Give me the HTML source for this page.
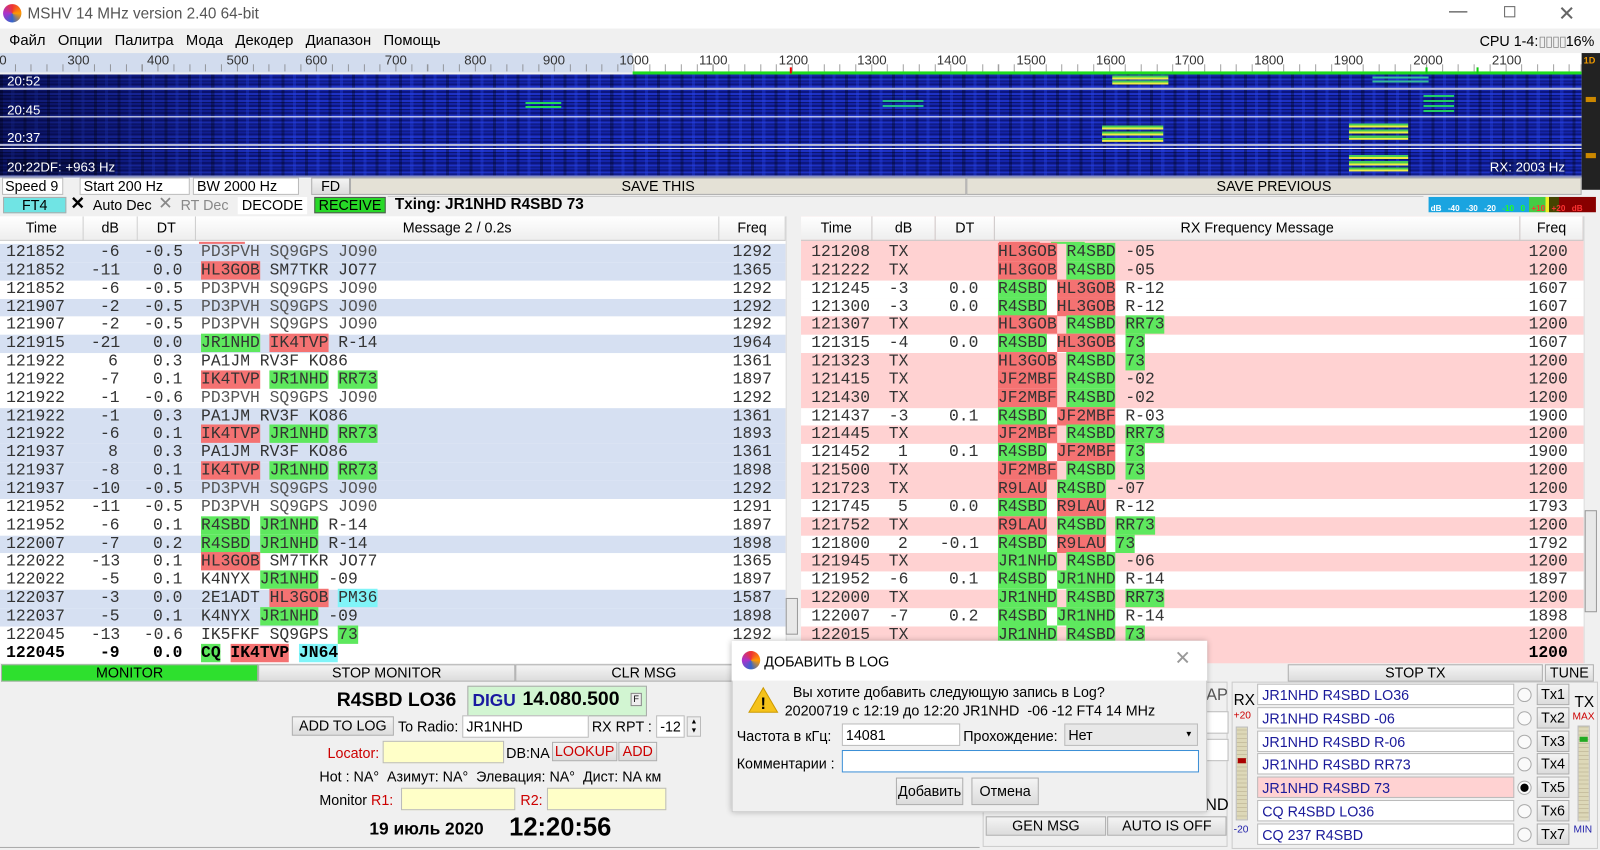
<!DOCTYPE html>
<html><head><meta charset="utf-8">
<style>
*{box-sizing:border-box;margin:0;padding:0}
body{width:1600px;height:850px;overflow:hidden;background:#f0f0f0;font-family:"Liberation Sans",sans-serif;font-size:14px;color:#000;position:relative}
#w{position:absolute;left:0;top:0;width:1568px;height:833px;transform:scale(1.020408);transform-origin:0 0}
.a{position:absolute}
.btn{position:absolute;border:1px solid #adadad;background:linear-gradient(#f4f4f4,#dcdcdc);text-align:center;font-size:14px;line-height:15px}
.tbl{position:absolute;background:#fff;overflow:hidden;font-family:"Liberation Mono",monospace;font-size:16px;color:#333}
.hd{position:absolute;top:0;height:24px;background:linear-gradient(#fff,#eee);border-right:1px solid #c8c8c8;border-bottom:1px solid #c8c8c8;font-family:"Liberation Sans",sans-serif;font-size:14px;text-align:center;line-height:23px;color:#000}
.r{position:relative;height:17.85px;line-height:17.85px;white-space:pre}
.r span{position:absolute;top:0}
.b{background:#d6e0f2}.p{background:#ffd2d2}
.R{background:#f47272;font-style:normal}.G{background:#5ee85e;font-style:normal}.C{background:#80f4f8;font-style:normal}
i{font-style:normal}
.sb{position:absolute;background:#f0f0f0;border-left:1px solid #ddd}
.in{position:absolute;background:#fff;border:1px solid #bbb;font-size:14px;line-height:20px;padding-left:3px}
.y{background:#ffffc8}
.tx{position:absolute;left:1232px;width:252px;height:21px;background:#fff;border:1px solid #bbb;color:#1a1a9a;font-size:14px;line-height:20px;padding-left:4px}
.rd{position:absolute;left:1487px;width:14px;height:14px;border-radius:50%;border:1px solid #aaa;background:#fafafa}
.tb{position:absolute;left:1506px;width:32px;height:21px;border:1px solid #adadad;background:linear-gradient(#f4f4f4,#dcdcdc);font-size:14px;text-align:center;line-height:19px}
</style></head><body><div id="w">
<div class="a" style="left:0;top:0;width:1568px;height:28px;background:#fff"></div>
<div class="a" style="left:3px;top:4px;width:18px;height:18px;border-radius:50%;background:conic-gradient(#e33,#f90,#36c,#a3c,#e33)"></div>
<div class="a" style="left:27px;top:5px;font-size:15px;color:#555">MSHV 14 MHz version 2.40 64-bit</div>
<div class="a" style="left:1420px;top:0px;font-size:18px;color:#555">—</div>
<div class="a" style="left:1474px;top:6px;width:11px;height:11px;border:1px solid #666"></div>
<div class="a" style="left:1527px;top:1px;font-size:20px;color:#666">✕</div>
<div class="a" style="left:0;top:28px;width:1568px;height:24px;background:#f0f0f0"></div>
<div class="a" style="left:9px;top:32px;font-size:14.5px;word-spacing:8px">Файл Опции Палитра Мода Декодер Диапазон Помощь</div>
<div class="a" style="left:1450px;top:32px;font-size:14px">CPU 1-4:<span style="letter-spacing:-1px;color:#888">▯▯▯▯</span>16%</div>
<div class="a" style="left:0;top:52px;width:620px;height:19px;background:#d2dcee"></div>
<div class="a" style="left:620px;top:52px;width:930px;height:19px;background:#fff"></div>
<div class="a" style="left:0;top:63px;width:1550px;height:7px;background:repeating-linear-gradient(90deg,#777 0 1px,transparent 1px 15.54px);background-position:-1px 0;opacity:.7"></div>
<div class="a" style="left:620px;top:70px;width:930px;height:3px;background:#1fdc1f"></div>
<div class="a" style="left:774px;top:66px;width:2px;height:6px;background:#e00"></div>
<div class="a" style="left:1397px;top:66px;width:2px;height:6px;background:#1c1"></div>
<div class="a" style="left:1447px;top:66px;width:2px;height:6px;background:#1c1"></div>
<div class="a" style="left:0;top:51px;font-size:13px;color:#333;width:1550px;height:14px">
<span class="a" style="left:-8px">00</span><span class="a" style="left:66px">300</span><span class="a" style="left:144px">400</span><span class="a" style="left:222px">500</span><span class="a" style="left:299px">600</span><span class="a" style="left:377px">700</span><span class="a" style="left:455px">800</span><span class="a" style="left:532px">900</span><span class="a" style="left:607px">1000</span><span class="a" style="left:685px">1100</span><span class="a" style="left:763px">1200</span><span class="a" style="left:840px">1300</span><span class="a" style="left:918px">1400</span><span class="a" style="left:996px">1500</span><span class="a" style="left:1074px">1600</span><span class="a" style="left:1151px">1700</span><span class="a" style="left:1229px">1800</span><span class="a" style="left:1307px">1900</span><span class="a" style="left:1385px">2000</span><span class="a" style="left:1462px">2100</span></div>
<div class="a" style="left:0;top:73px;width:1550px;height:100px;background:repeating-linear-gradient(0deg,#1424a8 0 2px,#0a1470 2px 3px,#1e32c4 3px 5px,#0c1680 5px 7px);"></div>
<div class="a" style="left:0;top:73px;width:1550px;height:100px;background:repeating-linear-gradient(90deg,rgba(0,0,0,.3) 0 3px,transparent 3px 11px,rgba(40,70,240,.35) 11px 14px,transparent 14px 23px)"></div>
<div class="a" style="left:0;top:73px;width:300px;height:100px;background:linear-gradient(90deg,rgba(0,0,20,.5),transparent)"></div>
<div class="a" style="left:0;top:86px;width:1550px;height:2px;background:#b8bcd8"></div>
<div class="a" style="left:0;top:114px;width:1550px;height:1px;background:#fff"></div>
<div class="a" style="left:0;top:141px;width:1550px;height:2px;background:#b8bcd8"></div>
<div class="a" style="left:0;top:145px;width:1550px;height:1px;background:#fff"></div>
<div class="a" style="left:0;top:172px;width:1550px;height:2px;background:#8890c0"></div>
<div class="a" style="left:1090px;top:73px;width:55px;height:10px;background:repeating-linear-gradient(0deg,#ee4 0 2px,#4c5 2px 4px,transparent 4px 5px)"></div>
<div class="a" style="left:1345px;top:75px;width:55px;height:6px;background:repeating-linear-gradient(0deg,#3b9 0 2px,transparent 2px 4px)"></div>
<div class="a" style="left:1395px;top:92px;width:30px;height:18px;background:repeating-linear-gradient(0deg,#2c6 0 2px,transparent 2px 5px)"></div>
<div class="a" style="left:865px;top:95px;width:40px;height:10px;background:repeating-linear-gradient(0deg,#2b8 0 2px,transparent 2px 5px)"></div>
<div class="a" style="left:515px;top:100px;width:35px;height:6px;background:repeating-linear-gradient(0deg,#2d5 0 2px,transparent 2px 4px)"></div>
<div class="a" style="left:1080px;top:121px;width:60px;height:18px;background:repeating-linear-gradient(0deg,#ee4 0 2px,#4c5 2px 4px,transparent 4px 6px)"></div>
<div class="a" style="left:1322px;top:121px;width:58px;height:16px;background:repeating-linear-gradient(0deg,#ee4 0 2px,#4c5 2px 4px,transparent 4px 6px)"></div>
<div class="a" style="left:1322px;top:150px;width:58px;height:18px;background:repeating-linear-gradient(0deg,#ee4 0 2px,#4c5 2px 4px,transparent 4px 6px)"></div>
<div class="a" style="left:7px;top:72px;color:#fff;font-size:13px">20:52</div>
<div class="a" style="left:7px;top:100px;color:#fff;font-size:13px">20:45</div>
<div class="a" style="left:7px;top:127px;color:#fff;font-size:13px">20:37</div>
<div class="a" style="left:7px;top:156px;color:#fff;font-size:13px;background:rgba(0,0,0,.3)">20:22DF: +963 Hz</div>
<div class="a" style="left:1460px;top:156px;color:#fff;font-size:13px;background:rgba(0,0,0,.3)">RX: 2003 Hz</div>
<div class="a" style="left:1550px;top:52px;width:18px;height:134px;background:#222"></div>
<div class="a" style="left:1552px;top:54px;font-size:9px;color:#e90;font-weight:bold">1D</div>
<div class="a" style="left:1554px;top:95px;width:10px;height:5px;background:#c80"></div>
<div class="a" style="left:1554px;top:150px;width:10px;height:5px;background:#c80"></div>
<div class="in" style="left:2px;top:174px;width:60px;height:17px;line-height:15px;font-size:14px;padding-left:2px">Speed 9</div>
<div class="in" style="left:78px;top:174px;width:108px;height:17px;line-height:15px">Start 200 Hz</div>
<div class="in" style="left:189px;top:174px;width:104px;height:17px;line-height:15px">BW 2000 Hz</div>
<div class="btn" style="left:305px;top:174px;width:38px;height:17px">FD</div>
<div class="btn" style="left:343px;top:174px;width:604px;height:17px;background:#e4e1d6">SAVE THIS</div>
<div class="btn" style="left:947px;top:174px;width:603px;height:17px;background:#e4e1d6">SAVE PREVIOUS</div>
<div class="btn" style="left:3px;top:193px;width:62px;height:16px;background:#70e4e4">FT4</div>
<div class="a" style="left:69px;top:190px;font-size:17px;font-weight:bold">✕</div>
<div class="a" style="left:91px;top:193px">Auto Dec</div>
<div class="a" style="left:155px;top:190px;font-size:17px;color:#888">✕</div>
<div class="a" style="left:177px;top:193px;color:#888">RT Dec</div>
<div class="a" style="left:233px;top:193px;width:68px;height:17px;background:#fff;text-align:center">DECODE</div>
<div class="btn" style="left:308px;top:193px;width:70px;height:16px;background:#27d827;border-color:#555">RECEIVE</div>
<div class="a" style="left:380px;top:192px;width:1015px;height:19px;background:#f0f0f0;border-top:1px solid #ccc"></div>
<div class="a" style="left:387px;top:192px;font-weight:bold;font-size:15px">Txing: JR1NHD R4SBD 73</div>
<div class="a" style="left:1400px;top:193px;width:164px;height:15px;background:linear-gradient(90deg,#1aa4e0 0 60%,#4c4 60% 70%,#ee2 70% 72%,#440 72% 78%,#800 78%)"></div>
<div class="a" style="left:1402px;top:200px;font-size:8px;color:#fff;font-weight:bold;word-spacing:4px">dB -40 -30 -20 <span style="color:#2f2">-10 0</span> <span style="color:#f33">+10 +20 dB</span></div>

<div class="tbl" style="left:0;top:212px;width:770px;height:438px">
<div class="hd" style="left:0;width:82px">Time</div><div class="hd" style="left:82px;width:53px">dB</div><div class="hd" style="left:135px;width:57px">DT</div><div class="hd" style="left:192px;width:513px">Message 2 / 0.2s</div><div class="hd" style="left:705px;width:65px">Freq</div>
<div class="a" style="left:195px;top:25px;width:45px;height:3px;background:#f47272"></div>
<div style="position:absolute;top:27px;left:0;width:770px">
<div class="r b"><span style="left:6px">121852</span><span style="left:98px">-6</span><span style="left:141px">-0.5</span><span style="left:197px;color:#555">PD3PVH SQ9GPS JO90</span><span style="left:718px">1292</span></div>
<div class="r b"><span style="left:6px">121852</span><span style="left:89px">-11</span><span style="left:150px">0.0</span><span style="left:197px"><i class=R>HL3GOB</i> SM7TKR JO77</span><span style="left:718px">1365</span></div>
<div class="r"><span style="left:6px">121852</span><span style="left:98px">-6</span><span style="left:141px">-0.5</span><span style="left:197px;color:#555">PD3PVH SQ9GPS JO90</span><span style="left:718px">1292</span></div>
<div class="r b"><span style="left:6px">121907</span><span style="left:98px">-2</span><span style="left:141px">-0.5</span><span style="left:197px;color:#555">PD3PVH SQ9GPS JO90</span><span style="left:718px">1292</span></div>
<div class="r"><span style="left:6px">121907</span><span style="left:98px">-2</span><span style="left:141px">-0.5</span><span style="left:197px;color:#555">PD3PVH SQ9GPS JO90</span><span style="left:718px">1292</span></div>
<div class="r b"><span style="left:6px">121915</span><span style="left:89px">-21</span><span style="left:150px">0.0</span><span style="left:197px"><i class=G>JR1NHD</i> <i class=R>IK4TVP</i> R-14</span><span style="left:718px">1964</span></div>
<div class="r"><span style="left:6px">121922</span><span style="left:106px">6</span><span style="left:150px">0.3</span><span style="left:197px">PA1JM RV3F KO86</span><span style="left:718px">1361</span></div>
<div class="r"><span style="left:6px">121922</span><span style="left:98px">-7</span><span style="left:150px">0.1</span><span style="left:197px"><i class=R>IK4TVP</i> <i class=G>JR1NHD</i> <i class=G>RR73</i></span><span style="left:718px">1897</span></div>
<div class="r"><span style="left:6px">121922</span><span style="left:98px">-1</span><span style="left:141px">-0.6</span><span style="left:197px;color:#555">PD3PVH SQ9GPS JO90</span><span style="left:718px">1292</span></div>
<div class="r b"><span style="left:6px">121922</span><span style="left:98px">-1</span><span style="left:150px">0.3</span><span style="left:197px">PA1JM RV3F KO86</span><span style="left:718px">1361</span></div>
<div class="r b"><span style="left:6px">121922</span><span style="left:98px">-6</span><span style="left:150px">0.1</span><span style="left:197px"><i class=R>IK4TVP</i> <i class=G>JR1NHD</i> <i class=G>RR73</i></span><span style="left:718px">1893</span></div>
<div class="r b"><span style="left:6px">121937</span><span style="left:106px">8</span><span style="left:150px">0.3</span><span style="left:197px">PA1JM RV3F KO86</span><span style="left:718px">1361</span></div>
<div class="r b"><span style="left:6px">121937</span><span style="left:98px">-8</span><span style="left:150px">0.1</span><span style="left:197px"><i class=R>IK4TVP</i> <i class=G>JR1NHD</i> <i class=G>RR73</i></span><span style="left:718px">1898</span></div>
<div class="r b"><span style="left:6px">121937</span><span style="left:89px">-10</span><span style="left:141px">-0.5</span><span style="left:197px;color:#555">PD3PVH SQ9GPS JO90</span><span style="left:718px">1292</span></div>
<div class="r"><span style="left:6px">121952</span><span style="left:89px">-11</span><span style="left:141px">-0.5</span><span style="left:197px;color:#555">PD3PVH SQ9GPS JO90</span><span style="left:718px">1291</span></div>
<div class="r"><span style="left:6px">121952</span><span style="left:98px">-6</span><span style="left:150px">0.1</span><span style="left:197px"><i class=G>R4SBD</i> <i class=G>JR1NHD</i> R-14</span><span style="left:718px">1897</span></div>
<div class="r b"><span style="left:6px">122007</span><span style="left:98px">-7</span><span style="left:150px">0.2</span><span style="left:197px"><i class=G>R4SBD</i> <i class=G>JR1NHD</i> R-14</span><span style="left:718px">1898</span></div>
<div class="r"><span style="left:6px">122022</span><span style="left:89px">-13</span><span style="left:150px">0.1</span><span style="left:197px"><i class=R>HL3GOB</i> SM7TKR JO77</span><span style="left:718px">1365</span></div>
<div class="r"><span style="left:6px">122022</span><span style="left:98px">-5</span><span style="left:150px">0.1</span><span style="left:197px">K4NYX <i class=G>JR1NHD</i> -09</span><span style="left:718px">1897</span></div>
<div class="r b"><span style="left:6px">122037</span><span style="left:98px">-3</span><span style="left:150px">0.0</span><span style="left:197px">2E1ADT <i class=R>HL3GOB</i> <i class=C>PM36</i></span><span style="left:718px">1587</span></div>
<div class="r b"><span style="left:6px">122037</span><span style="left:98px">-5</span><span style="left:150px">0.1</span><span style="left:197px">K4NYX <i class=G>JR1NHD</i> -09</span><span style="left:718px">1898</span></div>
<div class="r"><span style="left:6px">122045</span><span style="left:89px">-13</span><span style="left:141px">-0.6</span><span style="left:197px">IK5FKF SQ9GPS <i class=G>73</i></span><span style="left:718px">1292</span></div>
<div class="r" style="font-weight:bold;color:#000"><span style="left:6px">122045</span><span style="left:98px">-9</span><span style="left:150px">0.0</span><span style="left:197px"><i class=G>CQ</i> <i class=R>IK4TVP</i> <i class=C>JN64</i></span><span style="left:718px">1292</span></div>
</div></div>
<div class="sb" style="left:770px;top:212px;width:14px;height:438px"></div>
<div class="a" style="left:770px;top:586px;width:12px;height:36px;border:1px solid #999;background:#e8e8e8"></div>

<div class="tbl" style="left:785px;top:212px;width:767px;height:438px;background:#ffd2d2">
<div class="hd" style="left:0;width:70px">Time</div><div class="hd" style="left:70px;width:62px">dB</div><div class="hd" style="left:132px;width:58px">DT</div><div class="hd" style="left:190px;width:515px">RX Frequency Message</div><div class="hd" style="left:705px;width:62px">Freq</div>
<div class="a" style="left:194px;top:25px;width:40px;height:3px;background:#f47272"></div><div class="a" style="left:245px;top:25px;width:33px;height:3px;background:#5ee85e"></div>
<div style="position:absolute;top:27px;left:0;width:767px">
<div class="r p"><span style="left:10px">121208</span><span style="left:86px">TX</span><span style="left:193px"><i class=R>HL3GOB</i> <i class=G>R4SBD</i> -05</span><span style="left:713px">1200</span></div>
<div class="r p"><span style="left:10px">121222</span><span style="left:86px">TX</span><span style="left:193px"><i class=R>HL3GOB</i> <i class=G>R4SBD</i> -05</span><span style="left:713px">1200</span></div>
<div class="r" style="background:#fff"><span style="left:10px">121245</span><span style="left:86px">-3</span><span style="left:145px">0.0</span><span style="left:193px"><i class=G>R4SBD</i> <i class=R>HL3GOB</i> R-12</span><span style="left:713px">1607</span></div>
<div class="r" style="background:#fff"><span style="left:10px">121300</span><span style="left:86px">-3</span><span style="left:145px">0.0</span><span style="left:193px"><i class=G>R4SBD</i> <i class=R>HL3GOB</i> R-12</span><span style="left:713px">1607</span></div>
<div class="r p"><span style="left:10px">121307</span><span style="left:86px">TX</span><span style="left:193px"><i class=R>HL3GOB</i> <i class=G>R4SBD</i> <i class=G>RR73</i></span><span style="left:713px">1200</span></div>
<div class="r" style="background:#fff"><span style="left:10px">121315</span><span style="left:86px">-4</span><span style="left:145px">0.0</span><span style="left:193px"><i class=G>R4SBD</i> <i class=R>HL3GOB</i> <i class=G>73</i></span><span style="left:713px">1607</span></div>
<div class="r p"><span style="left:10px">121323</span><span style="left:86px">TX</span><span style="left:193px"><i class=R>HL3GOB</i> <i class=G>R4SBD</i> <i class=G>73</i></span><span style="left:713px">1200</span></div>
<div class="r p"><span style="left:10px">121415</span><span style="left:86px">TX</span><span style="left:193px"><i class=R>JF2MBF</i> <i class=G>R4SBD</i> -02</span><span style="left:713px">1200</span></div>
<div class="r p"><span style="left:10px">121430</span><span style="left:86px">TX</span><span style="left:193px"><i class=R>JF2MBF</i> <i class=G>R4SBD</i> -02</span><span style="left:713px">1200</span></div>
<div class="r" style="background:#fff"><span style="left:10px">121437</span><span style="left:86px">-3</span><span style="left:145px">0.1</span><span style="left:193px"><i class=G>R4SBD</i> <i class=R>JF2MBF</i> R-03</span><span style="left:713px">1900</span></div>
<div class="r p"><span style="left:10px">121445</span><span style="left:86px">TX</span><span style="left:193px"><i class=R>JF2MBF</i> <i class=G>R4SBD</i> <i class=G>RR73</i></span><span style="left:713px">1200</span></div>
<div class="r" style="background:#fff"><span style="left:10px">121452</span><span style="left:95px">1</span><span style="left:145px">0.1</span><span style="left:193px"><i class=G>R4SBD</i> <i class=R>JF2MBF</i> <i class=G>73</i></span><span style="left:713px">1900</span></div>
<div class="r p"><span style="left:10px">121500</span><span style="left:86px">TX</span><span style="left:193px"><i class=R>JF2MBF</i> <i class=G>R4SBD</i> <i class=G>73</i></span><span style="left:713px">1200</span></div>
<div class="r p"><span style="left:10px">121723</span><span style="left:86px">TX</span><span style="left:193px"><i class=R>R9LAU</i> <i class=G>R4SBD</i> -07</span><span style="left:713px">1200</span></div>
<div class="r" style="background:#fff"><span style="left:10px">121745</span><span style="left:95px">5</span><span style="left:145px">0.0</span><span style="left:193px"><i class=G>R4SBD</i> <i class=R>R9LAU</i> R-12</span><span style="left:713px">1793</span></div>
<div class="r p"><span style="left:10px">121752</span><span style="left:86px">TX</span><span style="left:193px"><i class=R>R9LAU</i> <i class=G>R4SBD</i> <i class=G>RR73</i></span><span style="left:713px">1200</span></div>
<div class="r" style="background:#fff"><span style="left:10px">121800</span><span style="left:95px">2</span><span style="left:136px">-0.1</span><span style="left:193px"><i class=G>R4SBD</i> <i class=R>R9LAU</i> <i class=G>73</i></span><span style="left:713px">1792</span></div>
<div class="r p"><span style="left:10px">121945</span><span style="left:86px">TX</span><span style="left:193px"><i class=G>JR1NHD</i> <i class=G>R4SBD</i> -06</span><span style="left:713px">1200</span></div>
<div class="r" style="background:#fff"><span style="left:10px">121952</span><span style="left:86px">-6</span><span style="left:145px">0.1</span><span style="left:193px"><i class=G>R4SBD</i> <i class=G>JR1NHD</i> R-14</span><span style="left:713px">1897</span></div>
<div class="r p"><span style="left:10px">122000</span><span style="left:86px">TX</span><span style="left:193px"><i class=G>JR1NHD</i> <i class=G>R4SBD</i> <i class=G>RR73</i></span><span style="left:713px">1200</span></div>
<div class="r" style="background:#fff"><span style="left:10px">122007</span><span style="left:86px">-7</span><span style="left:145px">0.2</span><span style="left:193px"><i class=G>R4SBD</i> <i class=G>JR1NHD</i> R-14</span><span style="left:713px">1898</span></div>
<div class="r p"><span style="left:10px">122015</span><span style="left:86px">TX</span><span style="left:193px"><i class=G>JR1NHD</i> <i class=G>R4SBD</i> <i class=G>73</i></span><span style="left:713px">1200</span></div>
<div class="r p" style="font-weight:bold;color:#000"><span style="left:713px">1200</span></div>
</div></div>
<div class="sb" style="left:1552px;top:212px;width:14px;height:438px"></div>
<div class="a" style="left:1553px;top:500px;width:12px;height:100px;border:1px solid #999;background:#e8e8e8"></div>

<div class="btn" style="left:1px;top:651px;width:252px;height:17px;background:#2ee02e">MONITOR</div>
<div class="btn" style="left:253px;top:651px;width:252px;height:17px">STOP MONITOR</div>
<div class="btn" style="left:505px;top:651px;width:252px;height:17px">CLR MSG</div>
<div class="btn" style="left:1262px;top:651px;width:250px;height:17px">STOP TX</div>
<div class="btn" style="left:1514px;top:651px;width:48px;height:17px">TUNE</div>
<div class="a" style="left:330px;top:676px;font-size:19px;font-weight:bold">R4SBD LO36</div>
<div class="a" style="left:458px;top:672px;width:176px;height:30px;background:#d2f5d2;border:1px solid #aaa"></div>
<div class="a" style="left:463px;top:677px;font-size:17px;font-weight:bold;color:#1a1aa0">DIGU</div>
<div class="a" style="left:512px;top:675px;font-size:19px;font-weight:bold">14.080.500</div>
<div class="a" style="left:618px;top:679px;width:11px;height:13px;border:1px solid #888;font-size:9px;text-align:center;background:#eee">F</div>
<div class="btn" style="left:286px;top:702px;width:100px;height:19px;line-height:17px">ADD TO LOG</div>
<div class="a" style="left:390px;top:704px">To Radio:</div>
<div class="in" style="left:453px;top:701px;width:124px;height:22px">JR1NHD</div>
<div class="a" style="left:580px;top:704px">RX RPT :</div>
<div class="in" style="left:643px;top:701px;width:28px;height:22px">-12</div>
<div class="a" style="left:673px;top:702px;width:14px;height:20px;border:1px solid #bbb;background:#eee;font-size:7px;text-align:center;line-height:9px">▲<br>▼</div>
<div class="a" style="left:321px;top:730px;color:#c00">Locator:</div>
<div class="in y" style="left:375px;top:726px;width:119px;height:22px"></div>
<div class="a" style="left:496px;top:730px">DB:NA</div>
<div class="btn" style="left:541px;top:727px;width:64px;height:19px;color:#c00;line-height:17px">LOOKUP</div>
<div class="btn" style="left:606px;top:727px;width:38px;height:19px;color:#c00;line-height:17px">ADD</div>
<div class="a" style="left:313px;top:753px;font-size:14px">Hot : NA°&nbsp; Азимут: NA°&nbsp; Элевация: NA°&nbsp; Дист: NA км</div>
<div class="a" style="left:313px;top:776px">Monitor <span style="color:#c00">R1:</span></div>
<div class="in y" style="left:393px;top:772px;width:112px;height:22px"></div>
<div class="a" style="left:510px;top:776px;color:#c00">R2:</div>
<div class="in y" style="left:536px;top:772px;width:117px;height:22px"></div>
<div class="a" style="left:362px;top:803px;font-size:17px;font-weight:bold">19 июль 2020</div>
<div class="a" style="left:499px;top:797px;font-size:25px;font-weight:bold">12:20:56</div>
<div class="a" style="left:0;top:830px;width:960px;height:1px;background:#aaa"></div>
<div class="a" style="left:963px;top:668px;width:240px;height:162px;border:1px solid #ccc"></div>
<div class="a" style="left:1182px;top:673px;font-size:16px;color:#555">AP</div>
<div class="a" style="left:1165px;top:692px;width:12px;height:22px;border:1px solid #bbb;background:#eee;font-size:7px;text-align:center;line-height:10px">▲<br>▼</div>
<div class="a" style="left:1180px;top:697px;width:24px;height:22px;border:1px solid #bbb;background:#fff"></div>
<div class="a" style="left:1180px;top:724px;width:24px;height:22px;border:1px solid #bbb;background:#fff"></div>
<div class="a" style="left:1181px;top:781px;font-size:16px">ND</div>
<div class="btn" style="left:966px;top:800px;width:118px;height:19px;line-height:17px">GEN MSG</div>
<div class="btn" style="left:1085px;top:800px;width:117px;height:19px;line-height:17px">AUTO IS OFF</div>
<div class="a" style="left:1207px;top:668px;width:359px;height:164px;border:1px solid #ccc"></div>
<div class="a" style="left:1209px;top:678px;font-size:15px">RX</div>
<div class="a" style="left:1209px;top:696px;font-size:10px;color:#c00">+20</div>
<div class="a" style="left:1211px;top:712px;width:12px;height:92px;background:repeating-linear-gradient(0deg,#ddd8b8 0 3px,#c8c0a0 3px 4px);border:1px solid #bbb"></div>
<div class="a" style="left:1213px;top:743px;width:8px;height:5px;background:#a00"></div>
<div class="a" style="left:1209px;top:808px;font-size:10px;color:#22a">-20</div>
<div class="a" style="left:1543px;top:680px;font-size:15px">TX</div>
<div class="a" style="left:1541px;top:697px;font-size:10px;color:#c00">MAX</div>
<div class="a" style="left:1546px;top:711px;width:12px;height:94px;background:repeating-linear-gradient(0deg,#ddd8b8 0 3px,#c8c0a0 3px 4px);border:1px solid #bbb"></div>
<div class="a" style="left:1548px;top:722px;width:8px;height:5px;background:#2a2"></div>
<div class="a" style="left:1542px;top:808px;font-size:10px;color:#22a">MIN</div>
<div class="tx" style="top:670px">JR1NHD R4SBD LO36</div>
<div class="tx" style="top:693px">JR1NHD R4SBD -06</div>
<div class="tx" style="top:716px">JR1NHD R4SBD R-06</div>
<div class="tx" style="top:738px">JR1NHD R4SBD RR73</div>
<div class="tx" style="top:761px;background:#ffd2d2">JR1NHD R4SBD 73</div>
<div class="tx" style="top:784px">CQ R4SBD LO36</div>
<div class="tx" style="top:807px">CQ 237 R4SBD</div>
<div class="rd" style="top:674px"></div><div class="rd" style="top:697px"></div><div class="rd" style="top:720px"></div><div class="rd" style="top:742px"></div><div class="rd" style="top:765px;background:radial-gradient(#000 45%,#fafafa 50%)"></div><div class="rd" style="top:788px"></div><div class="rd" style="top:811px"></div>
<div class="tb" style="top:670px">Tx1</div><div class="tb" style="top:693px">Tx2</div><div class="tb" style="top:716px">Tx3</div><div class="tb" style="top:738px">Tx4</div><div class="tb" style="top:761px">Tx5</div><div class="tb" style="top:784px">Tx6</div><div class="tb" style="top:807px">Tx7</div>

<div class="a" style="left:717px;top:628px;width:466px;height:168px;background:#f0f0f0;box-shadow:0 0 6px rgba(0,0,0,.3);border:1px solid #ccc"></div>
<div class="a" style="left:717px;top:628px;width:466px;height:39px;background:#fff"></div>
<div class="a" style="left:727px;top:638px;width:18px;height:18px;border-radius:50%;background:conic-gradient(#e33,#f90,#36c,#a3c,#e33)"></div>
<div class="a" style="left:749px;top:640px;font-size:14px">ДОБАВИТЬ В LOG</div>
<div class="a" style="left:1151px;top:634px;font-size:19px;color:#999">✕</div>
<svg class="a" style="left:733px;top:672px" width="30" height="28"><path d="M15 2 L29 26 H1 Z" fill="#f5c21a" stroke="#c90" stroke-width="1"/><text x="15" y="23" font-size="16" font-weight="bold" text-anchor="middle" font-family="Liberation Sans">!</text></svg>
<div class="a" style="left:777px;top:670px;font-size:14px">Вы хотите добавить следующую запись в Log?</div>
<div class="a" style="left:769px;top:688px;font-size:14px">20200719 с 12:19 до 12:20 JR1NHD&nbsp; -06 -12 FT4 14 MHz</div>
<div class="a" style="left:722px;top:713px">Частота в кГц:</div>
<div class="in" style="left:825px;top:709px;width:116px;height:22px">14081</div>
<div class="a" style="left:944px;top:713px">Прохождение:</div>
<div class="a" style="left:1043px;top:709px;width:131px;height:22px;border:1px solid #bbb;background:#e8e8e8;padding-left:3px;line-height:20px">Нет<span style="position:absolute;right:4px;font-size:8px">▼</span></div>
<div class="a" style="left:722px;top:740px">Комментарии :</div>
<div class="a" style="left:825px;top:735px;width:350px;height:22px;background:#fff;border:1px solid #3c8fd6"></div>
<div class="btn" style="left:878px;top:762px;width:66px;height:27px;line-height:25px">Добавить</div>
<div class="btn" style="left:952px;top:762px;width:66px;height:27px;line-height:25px">Отмена</div>
</div></body></html>
